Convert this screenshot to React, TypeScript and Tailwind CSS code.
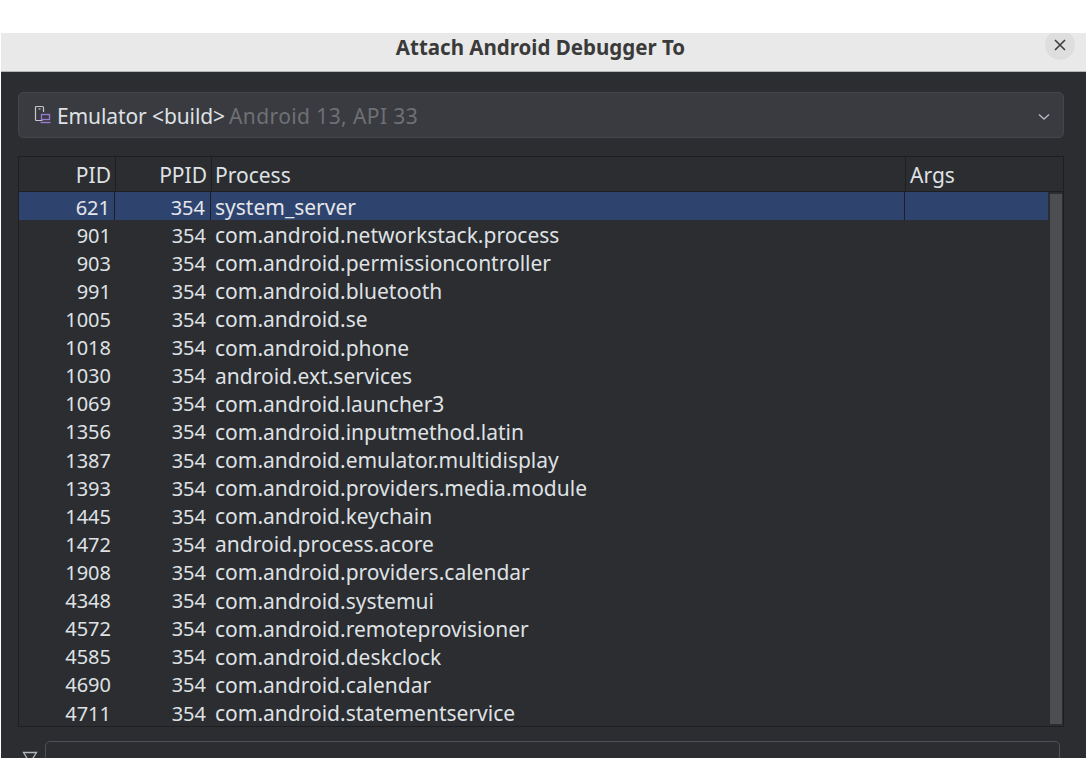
const rows: [string, string][] = [
  ["621", "system_server"],
  ["901", "com.android.networkstack.process"],
  ["903", "com.android.permissioncontroller"],
  ["991", "com.android.bluetooth"],
  ["1005", "com.android.se"],
  ["1018", "com.android.phone"],
  ["1030", "android.ext.services"],
  ["1069", "com.android.launcher3"],
  ["1356", "com.android.inputmethod.latin"],
  ["1387", "com.android.emulator.multidisplay"],
  ["1393", "com.android.providers.media.module"],
  ["1445", "com.android.keychain"],
  ["1472", "android.process.acore"],
  ["1908", "com.android.providers.calendar"],
  ["4348", "com.android.systemui"],
  ["4572", "com.android.remoteprovisioner"],
  ["4585", "com.android.deskclock"],
  ["4690", "com.android.calendar"],
  ["4711", "com.android.statementservice"],
];

function DeviceIcon() {
  return (
    <svg width="18" height="20" viewBox="0 0 18 20" fill="none" className="shrink-0">
      <path d="M8.500 15.500H2.500a1 1 0 0 1-1-1V2.500a1 1 0 0 1 1-1h6a1 1 0 0 1 1 1V7" stroke="#c4c6ca" strokeWidth="1.2" />
      <path d="M4.500 4h2" stroke="#c4c6ca" strokeWidth="1.2" />
      <rect x="7.500" y="9.500" width="8" height="5" stroke="#9a78d6" strokeWidth="1.3" />
      <path d="M6.500 17.500h10" stroke="#9a78d6" strokeWidth="1.4" />
    </svg>
  );
}

export default function App() {
  return (
    <div className="h-[758px] w-[1086px] overflow-hidden bg-white pt-[33px] pl-px font-['Noto_Sans',sans-serif] text-[21px] text-[#dfe1e5]">
      {/* title bar */}
      <div className="relative flex h-[39px] items-center justify-center overflow-hidden border-b border-[#b5b5b5] bg-[#e9e9e9] pr-[6px] pb-[10px]">
        <span className="text-[20.5px] font-bold text-[#3a3a3a]">Attach Android Debugger To</span>
        <button className="absolute top-[-3px] right-[11px] flex h-[30px] w-[30px] items-center justify-center rounded-full bg-[#dedede]">
          <svg width="12" height="12" viewBox="0 0 12 12" fill="none">
            <path d="M1 1l10 10M11 1L1 11" stroke="#3d3d3d" strokeWidth="1.6" />
          </svg>
        </button>
      </div>

      <div className="h-[686px] bg-[#2b2d30] pt-5 pr-[22px] pl-[17px]">
        {/* device combo */}
        <div className="flex h-[46px] items-center rounded-[5px] border border-[#43454a] bg-[#393b40] pr-[13px] pl-[15px]">
          <DeviceIcon />
          <span className="ml-[5px] pt-[3px] tracking-[-0.1px] whitespace-nowrap">Emulator &lt;build&gt;</span>
          <span className="ml-[4px] pt-[3px] tracking-[0.4px] whitespace-nowrap text-[#6f7074]">Android 13, API 33</span>
          <svg width="12" height="8" viewBox="0 0 12 8" fill="none" className="mt-[3px] ml-auto">
            <path d="M1 1.500l5 4.500 5-4.500" stroke="#b4b8bf" strokeWidth="1.400" />
          </svg>
        </div>

        {/* process table */}
        <div className="mt-[18px] h-[571px] border border-[#1e1f22]">
          <div className="flex h-[35px] border-b border-[#1e1f22]">
            <div className="flex w-[97px] items-center justify-end border-r border-[#1e1f22] pt-[3px] pr-[4px]">PID</div>
            <div className="flex w-[96px] items-center justify-end border-r border-[#1e1f22] pt-[3px] pr-[4px]">PPID</div>
            <div className="flex w-[694px] items-center border-r border-[#1e1f22] pt-[3px] pl-[3px]">Process</div>
            <div className="flex items-center pt-[3px] pl-[4px]">Args</div>
          </div>
          <div className="flex">
            <div className="w-[1029px]">
              {rows.map(([pid, name], i) => (
                <div key={pid} className={`flex h-[28.11px] leading-none ${i === 0 ? "bg-[#2e436e] text-[#e4e6ea]" : ""}`}>
                  <div className={`flex w-[96px] items-center justify-end pt-[3px] pr-[4px] text-[20px] ${i === 0 ? "border-r border-[#1e1f22]" : ""}`}>{pid}</div>
                  <div className={`flex w-[96px] items-center justify-end pt-[3px] pr-[5px] text-[20px] ${i === 0 ? "border-r border-[#1e1f22]" : ""}`}>354</div>
                  <div className={`flex w-[694px] items-center pt-[3px] pl-[4px] ${i === 0 ? "border-r border-[#1e1f22]" : ""}`}>{name}</div>
                  <div className="flex-1" />
                </div>
              ))}
            </div>
            <div className="mt-[2px] ml-[2px] h-[530px] w-[12px] bg-[#4c4e52]" />
          </div>
        </div>

        {/* filter row */}
        <div className="mt-[14px] flex pr-[4px]">
          <svg width="16" height="14" viewBox="0 0 16 14" fill="none" className="mt-[10px] ml-[4px] shrink-0">
            <path d="M1.500 1.500h13L8 12z" stroke="#b4b8bf" strokeWidth="1.300" />
          </svg>
          <div className="ml-[7px] h-[40px] flex-1 rounded-[5px] border border-[#4e5157]" />
        </div>
      </div>
    </div>
  );
}
